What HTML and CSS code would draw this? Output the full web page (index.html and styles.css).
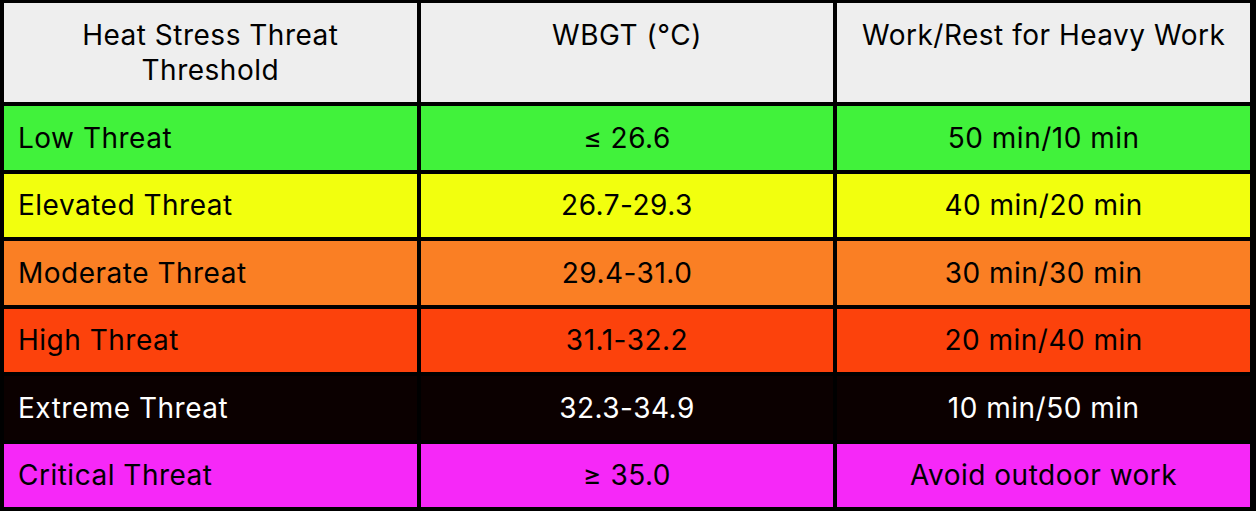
FILE: index.html
```html
<!DOCTYPE html>
<html lang="en">
<head>
  <meta charset="UTF-8">
  <title>Heat Stress Threat</title>
  <link rel="stylesheet" href="styles.css">
</head>
<body>
  <div class="threat-table">
    <div class="cell head">Heat Stress Threat Threshold</div>
    <div class="cell head">WBGT (°C)</div>
    <div class="cell head">Work/Rest for Heavy Work</div>

    <div class="cell low label">Low Threat</div>
    <div class="cell low">≤ 26.6</div>
    <div class="cell low">50 min/10 min</div>

    <div class="cell elevated label">Elevated Threat</div>
    <div class="cell elevated">26.7-29.3</div>
    <div class="cell elevated">40 min/20 min</div>

    <div class="cell moderate label">Moderate Threat</div>
    <div class="cell moderate">29.4-31.0</div>
    <div class="cell moderate">30 min/30 min</div>

    <div class="cell high label">High Threat</div>
    <div class="cell high">31.1-32.2</div>
    <div class="cell high">20 min/40 min</div>

    <div class="cell extreme label">Extreme Threat</div>
    <div class="cell extreme">32.3-34.9</div>
    <div class="cell extreme">10 min/50 min</div>

    <div class="cell critical label">Critical Threat</div>
    <div class="cell critical">≥ 35.0</div>
    <div class="cell critical">Avoid outdoor work</div>
  </div>
</body>
</html>
```

FILE: styles.css
```css
body {
  margin: 0;
  font-family: Inter, "Noto Sans", sans-serif;
}

.threat-table {
  width: 1256px;
  height: 511px;
  box-sizing: border-box;
  padding: 3px 6px 4px 4px;
  background: #000;
  display: grid;
  grid-template-columns: 1fr 1fr 1fr;
  grid-template-rows: 99px repeat(6, 1fr);
  gap: 4px;
}

.cell {
  display: flex;
  align-items: center;
  justify-content: center;
  text-align: center;
  font-size: 28px;
  letter-spacing: 0.5px;
  color: #000;
  padding: 0 14px;
}

.cell.label {
  justify-content: flex-start;
  text-align: left;
}

.head {
  background: #eeeeee;
  align-items: flex-start;
  padding-top: 15px;
  line-height: 35px;
  padding-left: 20px;
  padding-right: 20px;
}

.low { background: #41f23b; }
.elevated { background: #f2ff0e; }
.moderate { background: #fa7f24; }
.high { background: #fc420c; }
.extreme { background: #0b0000; color: #fff; }
.critical { background: #f628f8; }
```
